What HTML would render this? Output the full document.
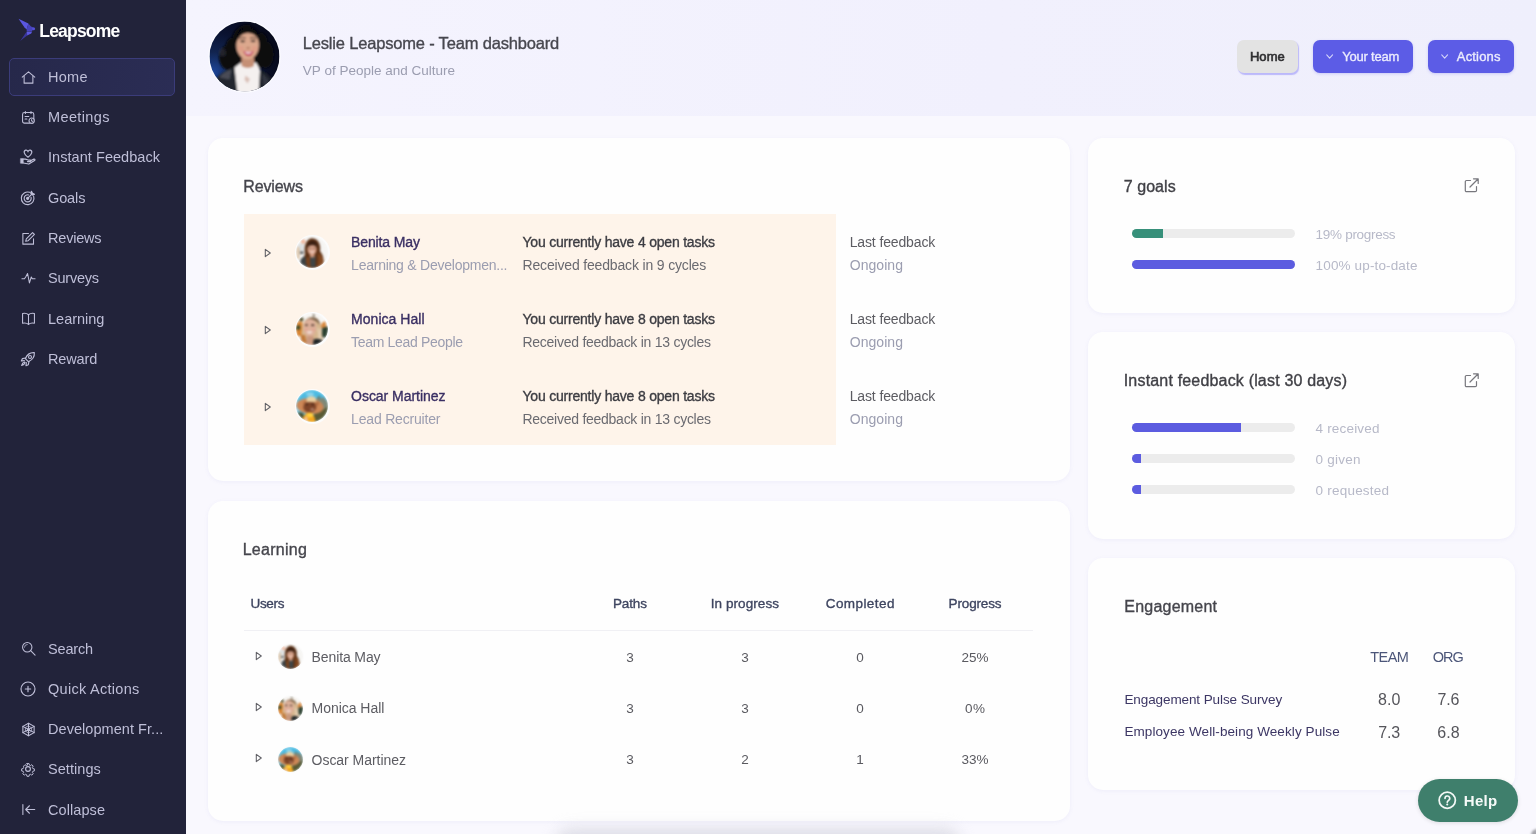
<!DOCTYPE html>
<html lang="en"><head><meta charset="utf-8"><title>Leapsome - Team dashboard</title>
<style>
html,body{margin:0;padding:0;}
body{width:1536px;height:834px;overflow:hidden;position:relative;background:#f9f8fe;font-family:"Liberation Sans",sans-serif;filter:blur(0.55px);}
.a{position:absolute;box-sizing:border-box;}
.t{position:absolute;white-space:nowrap;line-height:1;font-family:"Liberation Sans",sans-serif;}
.card{position:absolute;box-sizing:border-box;background:#fefefe;border-radius:15px;box-shadow:0 1px 4px rgba(120,110,200,0.08);}
svg{position:absolute;overflow:visible;}
#shapes{position:absolute;left:0;top:0;width:1536px;height:834px;}
#txt{position:absolute;left:0;top:0;width:1536px;height:834px;will-change:transform;}

</style></head>
<body>
<div id="shapes">
<div class="a" style="left:186.00px;top:0.00px;width:1350.00px;height:115.50px;background:linear-gradient(90deg,#f5f4fe 0%,#f1f0fd 60%,#efeffc 100%);"></div>
<div class="a" style="left:0.00px;top:0.00px;width:186.00px;height:834.00px;background:#22233a;"></div>
<svg style="left:18px;top:17.500px" width="18" height="24" viewBox="0 0 18 24">
<polygon points="0.500,0.800 10.400,5.500 8.700,11.600 6.500,9.500" fill="#5b57e2"/>
<polygon points="10.400,5.500 13,8.600 15,9.300 14.300,13 8.700,13.200 8.700,11.300" fill="#4844bd"/>
<ellipse cx="15.500" cy="10.800" rx="1.600" ry="1.500" fill="#5450d6"/>
<polygon points="8.900,13.400 14.200,13.600 13.200,15.600 9.100,17.400" fill="#5b57e2"/>
<polygon points="8.900,13.200 9.200,17.400 5,20.800 2.200,23 " fill="#3a379c"/>
</svg>
<div class="a" style="left:9.00px;top:57.50px;width:166.00px;height:38.50px;background:linear-gradient(100deg,#26284a 0%,#2b2d55 100%);border:1px solid #3b3c7a;border-radius:5px;"></div>
<svg style="left:20.70px;top:69.50px" width="15" height="15" viewBox="0 0 24 24" fill="none" stroke="#bfbfd8" stroke-width="1.7" stroke-linecap="round" stroke-linejoin="round"><path d="M2 11.5 L12 3 L22 11.5"/><path d="M5 10 V21 H19 V10"/></svg>
<svg style="left:20.70px;top:109.50px" width="15" height="15" viewBox="0 0 24 24" fill="none" stroke="#bfbfd8" stroke-width="1.7" stroke-linecap="round" stroke-linejoin="round"><rect x="2.5" y="4" width="18" height="17" rx="3"/><path d="M7 2.5v3M16 2.5v3M6.5 10.5h6M6.5 14.5h3"/><circle cx="17" cy="17" r="4.2" fill="#22233a"/><path d="M17 15.2v2l1.3 1"/></svg>
<svg style="left:20.20px;top:149.40px" width="16" height="16" viewBox="0 0 24 24" fill="none" stroke="#bfbfd8" stroke-width="1.7" stroke-linecap="round" stroke-linejoin="round"><path d="M12 12.300C5.500 8 4.800 2.800 8.600 1.700 10.500 1.300 12 3 12 4.300 12 3 13.500 1.300 15.400 1.700 19.200 2.800 18.500 8 12 12.300Z"/><path d="M1.200 14.500h3.600v6.800H1.200z" fill="#bfbfd8" stroke-width="1"/><path d="M4.800 15.200h3.400l4 1.400h3.200c1.400 0 1.400 2.300 0 2.300h-4.200"/><path d="M15.800 17.600l5-2.400c1.500-.5 2.400 1.300 1 2.100L13.200 22.600 4.800 21"/></svg>
<svg style="left:20.20px;top:189.60px" width="16" height="16" viewBox="0 0 24 24" fill="none" stroke="#bfbfd8" stroke-width="1.7" stroke-linecap="round" stroke-linejoin="round"><path d="M20.5 9.5A9.5 9.5 0 1 1 14.5 3.5"/><path d="M16.6 11A5.3 5.3 0 1 1 13 7.4"/><circle cx="11.5" cy="12.5" r="1.6" fill="#bfbfd8"/><path d="M11.5 12.5L18 6"/><path d="M16 4.5l1.2-2.5 1.5 3 3 1.5-2.5 1.2z" fill="#bfbfd8"/></svg>
<svg style="left:20.70px;top:230.50px" width="15" height="15" viewBox="0 0 24 24" fill="none" stroke="#bfbfd8" stroke-width="1.7" stroke-linecap="round" stroke-linejoin="round"><path d="M20 12.5V21H3V4h9"/><path d="M8.5 12.5L18.5 2.5l3 3-10 10-4 1z"/></svg>
<svg style="left:20.70px;top:270.80px" width="15" height="15" viewBox="0 0 24 24" fill="none" stroke="#bfbfd8" stroke-width="1.7" stroke-linecap="round" stroke-linejoin="round"><path d="M1.5 12.5h4l2-3 3-5.5 3 15 3-9.5 1.5 3h4.5"/></svg>
<svg style="left:20.70px;top:311.00px" width="15" height="15" viewBox="0 0 24 24" fill="none" stroke="#bfbfd8" stroke-width="1.7" stroke-linecap="round" stroke-linejoin="round"><path d="M12 6C10 4 6 3.2 2.5 4v15.5c3.500-.8 7.500 0 9.500 2 2-2 6-2.800 9.500-2V4C18 3.200 14 4 12 6z"/><path d="M12 6v15.500"/></svg>
<svg style="left:20.20px;top:350.80px" width="16" height="16" viewBox="0 0 24 24" fill="none" stroke="#bfbfd8" stroke-width="1.7" stroke-linecap="round" stroke-linejoin="round"><path d="M21.5 2.500c-6-.5-11 3-13.500 9l4.500 4.500c6-2.500 9.500-7.500 9-13.500z"/><circle cx="15" cy="9" r="2.200"/><path d="M8.500 10.500L3.500 11.500l-1.500 3.500 4.500-.5M13.500 15.500l-1 5-3.500 1.500.5-4.500M7 16.500c-2.500.5-4 2.500-4.500 5 2.500-.5 4.500-2 5-4.500"/></svg>
<svg style="left:20.70px;top:641.30px" width="15" height="15" viewBox="0 0 24 24" fill="none" stroke="#bfbfd8" stroke-width="1.7" stroke-linecap="round" stroke-linejoin="round"><circle cx="10" cy="10" r="7.500"/><path d="M15.500 15.500L22.500 22.500"/><path d="M5.500 10a4.500 4.500 0 0 1 4.500-4.500" stroke-width="1.200"/></svg>
<svg style="left:20.20px;top:680.60px" width="16" height="16" viewBox="0 0 24 24" fill="none" stroke="#bfbfd8" stroke-width="1.7" stroke-linecap="round" stroke-linejoin="round"><circle cx="12" cy="12" r="10.500"/><path d="M12 8v8M8 12h8"/></svg>
<svg style="left:20.70px;top:721.50px" width="15" height="15" viewBox="0 0 24 24" fill="none" stroke="#bfbfd8" stroke-width="1.7" stroke-linecap="round" stroke-linejoin="round"><path d="M12 2L21 7v10l-9 5-9-5V7z"/><path d="M12 2v20M3 7l18 10M21 7L3 17"/><path d="M12 6.500l5 2.800v5.400l-5 2.800-5-2.800V9.300z" stroke-width="1.200"/><circle cx="12" cy="12" r="1.500" fill="#bfbfd8"/></svg>
<svg style="left:20.20px;top:761.20px" width="16" height="16" viewBox="0 0 24 24" fill="none" stroke="#bfbfd8" stroke-width="1.7" stroke-linecap="round" stroke-linejoin="round"><circle cx="12" cy="12" r="3.600"/><path d="M10.200 2.500h3.600l.6 2.700 1.900.8 2.300-1.500 2.500 2.500-1.500 2.300.8 1.900 2.700.6v3.600l-2.700.6-.8 1.900 1.500 2.300-2.500 2.500-2.300-1.500-1.900.8-.6 2.700h-3.600l-.6-2.700-1.900-.8-2.300 1.500-2.500-2.500 1.500-2.300-.8-1.900-2.700-.6v-3.600l2.700-.6.8-1.900L4.300 7l2.500-2.500 2.300 1.500 1.900-.8z" transform="translate(12 12) scale(.86) translate(-12 -12)"/></svg>
<svg style="left:20.70px;top:802.10px" width="15" height="15" viewBox="0 0 24 24" fill="none" stroke="#bfbfd8" stroke-width="1.7" stroke-linecap="round" stroke-linejoin="round"><path d="M3 4v16M22 12H8M13.500 6L7.500 12l6 6"/></svg>
<svg style="left:208px;top:20px" width="73" height="73" viewBox="-1.500 -1.500 73 73">
<defs><clipPath id="cl"><circle cx="35" cy="35" r="35"/></clipPath>
<radialGradient id="lbg" cx="0.050" cy="0.720" r="0.950"><stop offset="0" stop-color="#1d469a"/><stop offset="0.300" stop-color="#11244f"/><stop offset="0.600" stop-color="#0a1230"/><stop offset="1" stop-color="#070a1c"/></radialGradient>
<filter id="b1" x="-10%" y="-10%" width="120%" height="120%"><feGaussianBlur stdDeviation="0.850"/></filter></defs>
<circle cx="35" cy="35" r="36.300" fill="#fbfbff"/>
<g clip-path="url(#cl)"><rect width="70" height="70" fill="url(#lbg)"/>
<g filter="url(#b1)">
<ellipse cx="37" cy="22" rx="15.500" ry="19" fill="#07070b"/>
<ellipse cx="38" cy="40" rx="19" ry="9" fill="#08080d"/>
<ellipse cx="19" cy="36" rx="9.500" ry="12.500" fill="#0b0b11"/>
<ellipse cx="23" cy="26" rx="7" ry="10" fill="#08080d"/>
<ellipse cx="56" cy="33" rx="8.500" ry="13.500" fill="#09090e"/>
<ellipse cx="52" cy="20" rx="6" ry="9" fill="#08080d"/>
<ellipse cx="27" cy="47" rx="7" ry="5" fill="#0b0b11"/>
<ellipse cx="13" cy="31" rx="3.500" ry="4" fill="#3a3c48" opacity="0.500"/>
<path d="M6 60 Q9 50 26.500 45.500 L30 72 L4 72Z" fill="#24272f"/>
<path d="M10 56 Q14 50 22 48 L20 58Z" fill="#666b76" opacity="0.550"/>
<path d="M46.500 47 Q60 51 63.500 60 L62 72 L47 72Z" fill="#1f2229"/>
<path d="M52 52 Q58 55 60 62 L54 64Z" fill="#4a4f5a" opacity="0.450"/>
<path d="M25 46 L31.500 41 L46.500 41 L50.500 48 L49 72 L28 72Z" fill="#f4f0ef"/>
<path d="M36 54 L40.500 57.500 L38 62 L35 58Z" fill="#d9bfb6"/>
<path d="M32 36 h12.500 v8.500 q-6.200 4 -12.500 0z" fill="#c58f74"/>
<ellipse cx="38.100" cy="23.500" rx="11.300" ry="14.400" fill="#dca88d"/>
<ellipse cx="31.500" cy="27" rx="3" ry="2.500" fill="#e39a86" opacity="0.600"/>
<ellipse cx="45" cy="27" rx="3" ry="2.500" fill="#e39a86" opacity="0.600"/>
<ellipse cx="33.200" cy="19.800" rx="2.600" ry="1.150" fill="#3a2a28"/>
<ellipse cx="43.600" cy="19.600" rx="2.600" ry="1.150" fill="#3a2a28"/>
<path d="M30 17 q3.200-1.800 6.200-.400M40.500 16.600q3-1.400 6.200.400" stroke="#2a1c1a" stroke-width="1" fill="none"/>
<ellipse cx="38.600" cy="26.500" rx="2" ry="1" fill="#b97f68"/>
<path d="M33.800 29.600 Q39 31 44.200 29.400 Q42.500 34.600 39 34.600 Q35.500 34.600 33.800 29.600Z" fill="#c12853"/>
<path d="M35 30.300 Q39 31.300 43 30.200 Q41.500 32.600 39 32.600 Q36.500 32.600 35 30.300Z" fill="#f7ecea"/>
<path d="M26.500 22 Q26 8 38 5.500 Q49 6 50 21 Q47 11.500 38 11.500 Q30 12 26.500 22Z" fill="#07070b"/>
</g></g></svg>
<div class="a" style="left:1237.25px;top:40.30px;width:61.00px;height:33.00px;background:#e3e3e3;border-radius:7px;box-shadow:1px 1.5px 1px rgba(170,165,250,0.75);"></div>
<div class="a" style="left:1313.30px;top:40.30px;width:99.60px;height:33.00px;background:#5c5ce6;border-radius:7px;box-shadow:0 1px 3px rgba(90,90,230,0.25);"></div>
<svg style="left:1326.400px;top:53.800px" width="7.300" height="5.500" viewBox="0 0 8 6" fill="none" stroke="#d6d6fa" stroke-width="1.150" stroke-linecap="round" stroke-linejoin="round"><path d="M0.800 1L4 4.500 7.200 1"/></svg>
<div class="a" style="left:1428.00px;top:40.30px;width:86.20px;height:33.00px;background:#5c5ce6;border-radius:7px;box-shadow:0 1px 3px rgba(90,90,230,0.25);"></div>
<svg style="left:1441.400px;top:53.800px" width="7.300" height="5.500" viewBox="0 0 8 6" fill="none" stroke="#d6d6fa" stroke-width="1.150" stroke-linecap="round" stroke-linejoin="round"><path d="M0.800 1L4 4.500 7.200 1"/></svg>
<div class="card" style="left:207.5px;top:137.5px;width:862.20px;height:343.50px"></div>
<div class="card" style="left:207.5px;top:500.5px;width:862.20px;height:320.50px"></div>
<div class="card" style="left:1088.2px;top:137.5px;width:426.60px;height:175.20px"></div>
<div class="card" style="left:1088.2px;top:332px;width:426.60px;height:206.60px"></div>
<div class="card" style="left:1088.2px;top:557.6px;width:426.60px;height:232.00px"></div>
<svg width="0" height="0" style="left:0;top:0"><defs>
<filter id="bs" x="-20%" y="-20%" width="140%" height="140%"><feGaussianBlur stdDeviation="0.7"/></filter>
<clipPath id="c32"><circle cx="16" cy="16" r="16"/></clipPath>
<symbol id="av-benita" viewBox="0 0 32 32"><g clip-path="url(#c32)"><rect width="32" height="32" fill="#f6f5f3"/>
<g>
<rect x="1.500" y="7.500" width="7" height="8" fill="#dde1e3"/>
<rect x="0.500" y="11" width="3.200" height="12" fill="#dcc6ac"/>
<ellipse cx="7.200" cy="5.600" rx="2.400" ry="2.300" fill="#efb79e"/>
<rect x="4" y="15.500" width="3.500" height="2.500" fill="#5a5d5f"/>
<path d="M4 32 L4.500 24 Q7 19.500 12 19 L22 19.500 Q25 22 25 32Z" fill="#3b4143"/>
<path d="M9 18 Q7.500 8 12.500 3.500 Q16.500 1 21 4 Q25 8 24 15 Q27.500 19 27.500 25 Q27.500 30 25 31 L20 32 L12 32 Q9.500 27 10 22 Q7.500 21 9 18Z" fill="#5e3216"/>
<path d="M22 17 Q27 20 27.500 25 Q27.500 30 25 31 L21 31.500 Q23 24 22 17Z" fill="#824821"/>
<path d="M10 22 Q9.500 27 12 32 L15.500 32 Q14 26 14.500 21Z" fill="#7a431e"/>
<path d="M14 20 h5.500 v11 h-5z" fill="#3f4547"/>
<path d="M14 17 h4.500 v4 q-2.200 1.200 -4.500 0z" fill="#c99378"/>
<ellipse cx="16" cy="13.400" rx="4.500" ry="5.500" fill="#dba68e"/>
<ellipse cx="14.200" cy="12.300" rx="0.900" ry="0.500" fill="#3c2820"/>
<ellipse cx="17.900" cy="12.300" rx="0.900" ry="0.500" fill="#3c2820"/>
<ellipse cx="16.200" cy="16" rx="1.700" ry="0.700" fill="#f3e4df"/>
<path d="M10.800 12 Q11 5 16.500 4.500 Q22 5 21.500 12 Q20 8.500 16 9.300 Q12.500 9 10.800 12Z" fill="#3a1f12"/>
</g></g></symbol>
<symbol id="av-monica" viewBox="0 0 32 32"><g clip-path="url(#c32)"><rect width="32" height="32" fill="#f7f5f2"/>
<g>
<rect x="0" y="8.500" width="6.500" height="14.500" fill="#d78330"/>
<rect x="0" y="12.500" width="4.200" height="4" fill="#3e4a28"/>
<ellipse cx="5.200" cy="6.300" rx="2.300" ry="2" fill="#4b4a28"/>
<rect x="26" y="13.500" width="6" height="11" fill="#2a4030"/>
<path d="M24.500 14.500 Q25.500 8 29.500 8.500 L30.500 14 L26 15Z" fill="#d8883f"/>
<rect x="16.900" y="0.800" width="1.500" height="3.500" fill="#7a7060"/>
<path d="M5.500 31 Q4.500 14 8.500 8 Q13 2.500 20 5 Q25.500 8 25.500 18 Q26.500 24 27 28 L20 32 L6 32Z" fill="#d6b68e"/>
<path d="M4.500 22 Q4 29 9 32 L12 32 Q9.500 26 9 22Z" fill="#c17a3a"/>
<path d="M21 14 Q25.500 17 26.500 27 L22 28 Q22.500 20 21 14Z" fill="#e3cdb0"/>
<path d="M8 10 Q12 2.500 20 5 Q23.500 7 24 12 Q19 5.500 13 7 Q9.500 8 8 10Z" fill="#7a6048"/>
<path d="M11 23 h6.500 v9 h-7.500z" fill="#c9987e"/>
<ellipse cx="13.900" cy="14.500" rx="6.400" ry="8.800" fill="#deb19b"/>
<ellipse cx="10.500" cy="16.800" rx="1.800" ry="1.500" fill="#e39c8a" opacity="0.600"/>
<ellipse cx="17.300" cy="16.800" rx="1.800" ry="1.500" fill="#e39c8a" opacity="0.600"/>
<ellipse cx="10.500" cy="12" rx="1.700" ry="0.850" fill="#4a3428"/>
<ellipse cx="16.700" cy="12.200" rx="1.700" ry="0.850" fill="#4a3428"/>
<path d="M10.300 17.800 Q13.500 19 16.700 17.800 Q15.500 20.800 13.500 20.800 Q11.500 20.800 10.300 17.800Z" fill="#f4e6e1"/>
<path d="M17 32 L17.500 26.500 Q22 24.500 27 27.500 L26 32Z" fill="#1e2426"/>
</g></g></symbol>
<symbol id="av-oscar" viewBox="0 0 32 32"><g clip-path="url(#c32)"><rect width="32" height="32" fill="#56c0e4"/>
<g>
<path d="M0 0 h32 v10 h-32z" fill="#4dbbe2"/>
<ellipse cx="14" cy="4" rx="4" ry="1.800" fill="#8fd6ee"/>
<path d="M20 9 L22.500 6.500 L24 9 L27 7 L32 12 L32 20 L22 18Z" fill="#7f8878"/>
<path d="M22 8 L23 5 L24.500 9Z" fill="#5f6a58"/>
<path d="M18 24 L32 17 L32 32 L16 32Z" fill="#595a34"/>
<path d="M0 22 L7 23 L10 32 L0 32Z" fill="#4a5030"/>
<rect x="0" y="17.500" width="3.500" height="4" fill="#9ad4ea"/>
<ellipse cx="14" cy="16.200" rx="13.700" ry="7.800" fill="#cd8756" transform="rotate(6 14 16)"/>
<ellipse cx="15" cy="13.500" rx="8" ry="3.500" fill="#b06c40"/>
<ellipse cx="15.300" cy="9.200" rx="4.600" ry="3" fill="#ecd4a8"/>
<path d="M10.700 9.500 Q15 7.500 20 9.500 L20.500 12.500 Q15.500 10.500 10.500 12.500Z" fill="#e8cc9c"/>
<ellipse cx="13.800" cy="17.200" rx="6.500" ry="5.300" fill="#7e4428"/>
<ellipse cx="10.800" cy="14.300" rx="1.300" ry="0.800" fill="#2e1810"/>
<ellipse cx="16.800" cy="14.300" rx="1.300" ry="0.800" fill="#2e1810"/>
<ellipse cx="16.300" cy="19.400" rx="2" ry="0.900" fill="#c49a88"/>
<path d="M5.500 32 Q7 24 12.500 22.500 Q18.500 22.500 19.500 32Z" fill="#f4a51c"/>
<ellipse cx="14" cy="25" rx="3.200" ry="2.300" fill="#ffd23e"/>
<ellipse cx="10" cy="29" rx="1.500" ry="2.500" fill="#f2c4a2"/>
</g></g></symbol>
</defs></svg>
<div class="a" style="left:243.75px;top:214.00px;width:592.20px;height:230.80px;background:#fef4ea;"></div>
<svg style="left:264.20px;top:247.60px" width="7.60" height="10.00" viewBox="-1 -1 7.60 10.00" fill="none" stroke="#606066" stroke-width="1.050" stroke-linejoin="round"><path d="M0.300 0.300 L5.30 4.00 L0.300 7.70Z"/></svg>
<div class="a" style="left:295.00px;top:235.00px;width:34.80px;height:34.80px;border-radius:50%;background:#fcfcfc;"></div>
<div class="a" style="left:296.40px;top:236.40px;width:32px;height:32px;border-radius:50%;overflow:hidden;"><svg style="left:0;top:0;filter:blur(0.90px)" width="32" height="32" viewBox="0 0 32 32"><use href="#av-benita"/></svg></div>
<svg style="left:264.20px;top:324.60px" width="7.60" height="10.00" viewBox="-1 -1 7.60 10.00" fill="none" stroke="#606066" stroke-width="1.050" stroke-linejoin="round"><path d="M0.300 0.300 L5.30 4.00 L0.300 7.70Z"/></svg>
<div class="a" style="left:295.00px;top:312.00px;width:34.80px;height:34.80px;border-radius:50%;background:#fcfcfc;"></div>
<div class="a" style="left:296.40px;top:313.40px;width:32px;height:32px;border-radius:50%;overflow:hidden;"><svg style="left:0;top:0;filter:blur(0.90px)" width="32" height="32" viewBox="0 0 32 32"><use href="#av-monica"/></svg></div>
<svg style="left:264.20px;top:401.60px" width="7.60" height="10.00" viewBox="-1 -1 7.60 10.00" fill="none" stroke="#606066" stroke-width="1.050" stroke-linejoin="round"><path d="M0.300 0.300 L5.30 4.00 L0.300 7.70Z"/></svg>
<div class="a" style="left:295.00px;top:389.00px;width:34.80px;height:34.80px;border-radius:50%;background:#fcfcfc;"></div>
<div class="a" style="left:296.40px;top:390.40px;width:32px;height:32px;border-radius:50%;overflow:hidden;"><svg style="left:0;top:0;filter:blur(0.90px)" width="32" height="32" viewBox="0 0 32 32"><use href="#av-oscar"/></svg></div>
<div class="a" style="left:243.75px;top:630.00px;width:789.00px;height:1.00px;background:#f0f0f4;"></div>
<svg style="left:255.10px;top:650.60px" width="7.60" height="10.00" viewBox="-1 -1 7.60 10.00" fill="none" stroke="#606066" stroke-width="1.050" stroke-linejoin="round"><path d="M0.300 0.300 L5.30 4.00 L0.300 7.70Z"/></svg>
<div class="a" style="left:276.80px;top:643.20px;width:27.00px;height:27.00px;border-radius:50%;background:#fcfcfc;"></div>
<div class="a" style="left:277.80px;top:644.20px;width:25px;height:25px;border-radius:50%;overflow:hidden;"><svg style="left:0;top:0;filter:blur(0.80px)" width="25" height="25" viewBox="0 0 32 32"><use href="#av-benita"/></svg></div>
<svg style="left:255.10px;top:701.90px" width="7.60" height="10.00" viewBox="-1 -1 7.60 10.00" fill="none" stroke="#606066" stroke-width="1.050" stroke-linejoin="round"><path d="M0.300 0.300 L5.30 4.00 L0.300 7.70Z"/></svg>
<div class="a" style="left:276.80px;top:694.50px;width:27.00px;height:27.00px;border-radius:50%;background:#fcfcfc;"></div>
<div class="a" style="left:277.80px;top:695.50px;width:25px;height:25px;border-radius:50%;overflow:hidden;"><svg style="left:0;top:0;filter:blur(0.80px)" width="25" height="25" viewBox="0 0 32 32"><use href="#av-monica"/></svg></div>
<svg style="left:255.10px;top:753.20px" width="7.60" height="10.00" viewBox="-1 -1 7.60 10.00" fill="none" stroke="#606066" stroke-width="1.050" stroke-linejoin="round"><path d="M0.300 0.300 L5.30 4.00 L0.300 7.70Z"/></svg>
<div class="a" style="left:276.80px;top:745.80px;width:27.00px;height:27.00px;border-radius:50%;background:#fcfcfc;"></div>
<div class="a" style="left:277.80px;top:746.80px;width:25px;height:25px;border-radius:50%;overflow:hidden;"><svg style="left:0;top:0;filter:blur(0.80px)" width="25" height="25" viewBox="0 0 32 32"><use href="#av-oscar"/></svg></div>
<div class="a" style="left:556.00px;top:829.00px;width:404.00px;height:30.00px;background:#d6d6e0;border-radius:20px;filter:blur(8px);opacity:.85;"></div>
<svg style="left:1464.10px;top:178.20px" width="15" height="15" viewBox="0 0 15 15" fill="none" stroke="#77777d" stroke-width="1.200" stroke-linecap="round" stroke-linejoin="round"><path d="M12.500 8.500V12.500a1.200 1.200 0 0 1-1.200 1.200H2.500A1.200 1.200 0 0 1 1.300 12.500V3.700A1.200 1.200 0 0 1 2.500 2.500H6.500"/><path d="M6 9L14 1M9.500 0.800H14.200V5.500"/></svg>
<div class="a" style="left:1131.70px;top:229.10px;width:162.90px;height:9.00px;background:#ececec;border-radius:5px;overflow:hidden;"></div>
<div class="a" style="left:1131.70px;top:229.10px;width:31.44px;height:9.00px;background:#37907a;border-radius:5px 0 0 5px;"></div>
<div class="a" style="left:1131.70px;top:260.20px;width:162.90px;height:9.00px;background:#ececec;border-radius:5px;overflow:hidden;"></div>
<div class="a" style="left:1131.70px;top:260.20px;width:162.90px;height:9.00px;background:#5c5ce0;border-radius:5px;"></div>
<svg style="left:1464.10px;top:372.80px" width="15" height="15" viewBox="0 0 15 15" fill="none" stroke="#77777d" stroke-width="1.200" stroke-linecap="round" stroke-linejoin="round"><path d="M12.500 8.500V12.500a1.200 1.200 0 0 1-1.200 1.200H2.500A1.200 1.200 0 0 1 1.300 12.500V3.700A1.200 1.200 0 0 1 2.500 2.500H6.500"/><path d="M6 9L14 1M9.500 0.800H14.200V5.500"/></svg>
<div class="a" style="left:1131.70px;top:423.00px;width:162.90px;height:9.00px;background:#ececec;border-radius:5px;overflow:hidden;"></div>
<div class="a" style="left:1131.70px;top:423.00px;width:108.98px;height:9.00px;background:#5c5ce0;border-radius:5px 0 0 5px;"></div>
<div class="a" style="left:1131.70px;top:454.20px;width:162.90px;height:9.00px;background:#ececec;border-radius:5px;overflow:hidden;"></div>
<div class="a" style="left:1131.70px;top:454.20px;width:9.29px;height:9.00px;background:#5c5ce0;border-radius:5px 0 0 5px;"></div>
<div class="a" style="left:1131.70px;top:485.30px;width:162.90px;height:9.00px;background:#ececec;border-radius:5px;overflow:hidden;"></div>
<div class="a" style="left:1131.70px;top:485.30px;width:9.29px;height:9.00px;background:#5c5ce0;border-radius:5px 0 0 5px;"></div>
<div class="a" style="left:1418.40px;top:778.80px;width:99.60px;height:42.90px;background:#3f7f6c;border-radius:21.5px;box-shadow:0 1px 4px rgba(0,0,0,0.12);"></div>
<svg style="left:1438.400px;top:791.100px" width="18.500" height="18.500" viewBox="0 0 18 18" fill="none" stroke="#f3f8f6" stroke-width="1.700" stroke-linecap="round" stroke-linejoin="round"><circle cx="9" cy="9" r="7.900"/><path d="M6.800 7.200a2.300 2.300 0 1 1 3.400 2c-.8.500-1.200.9-1.200 1.800" stroke-width="1.600"/><circle cx="9" cy="13.200" r=".5" fill="#f3f8f6" stroke-width="1"/></svg>
<div class="a" style="left:1531.00px;top:829.00px;width:12.00px;height:12.00px;background:#8a8a90;border-radius:50%;filter:blur(1.200px);opacity:.75;"></div>
</div>
<div id="txt">
<div class="t" style="left:39.26px;top:22.87px;font-size:17.5px;color:#ffffff;letter-spacing:-0.804px;font-weight:700;">Leapsome</div>
<div class="t" style="left:48.06px;top:70.01px;font-size:14.5px;color:#bfbfd8;letter-spacing:0.254px;">Home</div>
<div class="t" style="left:48.06px;top:110.21px;font-size:14.5px;color:#bfbfd8;letter-spacing:0.358px;">Meetings</div>
<div class="t" style="left:48.06px;top:150.41px;font-size:14.5px;color:#bfbfd8;letter-spacing:0.047px;">Instant Feedback</div>
<div class="t" style="left:48.06px;top:190.76px;font-size:14.5px;color:#bfbfd8;letter-spacing:-0.134px;">Goals</div>
<div class="t" style="left:48.06px;top:231.21px;font-size:14.5px;color:#bfbfd8;letter-spacing:-0.225px;">Reviews</div>
<div class="t" style="left:48.06px;top:271.31px;font-size:14.5px;color:#bfbfd8;letter-spacing:-0.240px;">Surveys</div>
<div class="t" style="left:48.06px;top:311.61px;font-size:14.5px;color:#bfbfd8;letter-spacing:-0.014px;">Learning</div>
<div class="t" style="left:48.06px;top:351.81px;font-size:14.5px;color:#bfbfd8;letter-spacing:-0.155px;">Reward</div>
<div class="t" style="left:48.06px;top:641.51px;font-size:14.5px;color:#bfbfd8;letter-spacing:-0.200px;">Search</div>
<div class="t" style="left:48.06px;top:681.51px;font-size:14.5px;color:#bfbfd8;letter-spacing:0.279px;">Quick Actions</div>
<div class="t" style="left:48.06px;top:722.01px;font-size:14.5px;color:#bfbfd8;letter-spacing:0.047px;">Development Fr...</div>
<div class="t" style="left:48.06px;top:762.26px;font-size:14.5px;color:#bfbfd8;letter-spacing:0.043px;">Settings</div>
<div class="t" style="left:48.06px;top:802.76px;font-size:14.5px;color:#bfbfd8;letter-spacing:0.074px;">Collapse</div>
<div class="t" style="left:302.68px;top:35.30px;font-size:16.5px;color:#47474f;letter-spacing:-0.176px;-webkit-text-stroke:0.35px #47474f;">Leslie Leapsome - Team dashboard</div>
<div class="t" style="left:302.87px;top:63.69px;font-size:13.5px;color:#9b9db0;">VP of People and Culture</div>
<div class="t" style="left:1249.95px;top:50.43px;font-size:13px;color:#2e2e30;letter-spacing:0.039px;-webkit-text-stroke:0.6px #2e2e30;">Home</div>
<div class="t" style="left:1342.15px;top:50.43px;font-size:13px;color:#ececfd;letter-spacing:-0.205px;-webkit-text-stroke:0.35px #ececfd;">Your team</div>
<div class="t" style="left:1456.86px;top:50.43px;font-size:13px;color:#ececfd;letter-spacing:0.152px;-webkit-text-stroke:0.35px #ececfd;">Actions</div>
<div class="t" style="left:243.21px;top:179.09px;font-size:16px;color:#45454c;letter-spacing:-0.112px;-webkit-text-stroke:0.35px #45454c;">Reviews</div>
<div class="t" style="left:351.09px;top:234.55px;font-size:14px;color:#3a2f63;letter-spacing:-0.125px;-webkit-text-stroke:0.35px #3a2f63;">Benita May</div>
<div class="t" style="left:351.09px;top:258.45px;font-size:14px;color:#9b9db0;letter-spacing:-0.238px;">Learning &amp; Developmen...</div>
<div class="t" style="left:522.49px;top:234.55px;font-size:14px;color:#3c3c42;letter-spacing:-0.207px;-webkit-text-stroke:0.35px #3c3c42;">You currently have 4 open tasks</div>
<div class="t" style="left:522.49px;top:258.45px;font-size:14px;color:#6a6a70;letter-spacing:-0.163px;">Received feedback in 9 cycles</div>
<div class="t" style="left:849.69px;top:234.55px;font-size:14px;color:#5c5c62;letter-spacing:-0.130px;">Last feedback</div>
<div class="t" style="left:849.69px;top:258.45px;font-size:14px;color:#9b9db0;letter-spacing:0.063px;">Ongoing</div>
<div class="t" style="left:351.09px;top:311.55px;font-size:14px;color:#3a2f63;letter-spacing:0.027px;-webkit-text-stroke:0.35px #3a2f63;">Monica Hall</div>
<div class="t" style="left:351.09px;top:335.45px;font-size:14px;color:#9b9db0;letter-spacing:-0.323px;">Team Lead People</div>
<div class="t" style="left:522.49px;top:311.55px;font-size:14px;color:#3c3c42;letter-spacing:-0.207px;-webkit-text-stroke:0.35px #3c3c42;">You currently have 8 open tasks</div>
<div class="t" style="left:522.49px;top:335.45px;font-size:14px;color:#6a6a70;letter-spacing:-0.262px;">Received feedback in 13 cycles</div>
<div class="t" style="left:849.69px;top:311.55px;font-size:14px;color:#5c5c62;letter-spacing:-0.130px;">Last feedback</div>
<div class="t" style="left:849.69px;top:335.45px;font-size:14px;color:#9b9db0;letter-spacing:0.063px;">Ongoing</div>
<div class="t" style="left:351.09px;top:388.55px;font-size:14px;color:#3a2f63;letter-spacing:-0.039px;-webkit-text-stroke:0.35px #3a2f63;">Oscar Martinez</div>
<div class="t" style="left:351.09px;top:412.45px;font-size:14px;color:#9b9db0;letter-spacing:-0.186px;">Lead Recruiter</div>
<div class="t" style="left:522.49px;top:388.55px;font-size:14px;color:#3c3c42;letter-spacing:-0.207px;-webkit-text-stroke:0.35px #3c3c42;">You currently have 8 open tasks</div>
<div class="t" style="left:522.49px;top:412.45px;font-size:14px;color:#6a6a70;letter-spacing:-0.262px;">Received feedback in 13 cycles</div>
<div class="t" style="left:849.69px;top:388.55px;font-size:14px;color:#5c5c62;letter-spacing:-0.130px;">Last feedback</div>
<div class="t" style="left:849.69px;top:412.45px;font-size:14px;color:#9b9db0;letter-spacing:0.063px;">Ongoing</div>
<div class="t" style="left:242.71px;top:541.59px;font-size:16px;color:#45454c;letter-spacing:0.273px;-webkit-text-stroke:0.35px #45454c;">Learning</div>
<div class="t" style="left:250.62px;top:597.09px;font-size:13.5px;color:#3e4560;letter-spacing:-0.369px;-webkit-text-stroke:0.35px #3e4560;">Users</div>
<div class="t" style="left:613.02px;top:597.09px;font-size:13.5px;color:#3e4560;letter-spacing:-0.161px;-webkit-text-stroke:0.35px #3e4560;">Paths</div>
<div class="t" style="left:710.67px;top:597.09px;font-size:13.5px;color:#3e4560;letter-spacing:0.084px;-webkit-text-stroke:0.35px #3e4560;">In progress</div>
<div class="t" style="left:825.72px;top:597.09px;font-size:13.5px;color:#3e4560;letter-spacing:0.424px;-webkit-text-stroke:0.35px #3e4560;">Completed</div>
<div class="t" style="left:948.62px;top:597.09px;font-size:13.5px;color:#3e4560;letter-spacing:-0.164px;-webkit-text-stroke:0.35px #3e4560;">Progress</div>
<div class="t" style="left:311.59px;top:650.15px;font-size:14px;color:#5c5c62;letter-spacing:-0.114px;">Benita May</div>
<div class="t" style="left:626.22px;top:650.69px;font-size:13.5px;color:#5a5a60;letter-spacing:-0.231px;">3</div>
<div class="t" style="left:741.22px;top:650.69px;font-size:13.5px;color:#5a5a60;letter-spacing:-0.231px;">3</div>
<div class="t" style="left:856.32px;top:650.69px;font-size:13.5px;color:#5a5a60;letter-spacing:-0.231px;">0</div>
<div class="t" style="left:961.62px;top:650.69px;font-size:13.5px;color:#5a5a60;letter-spacing:-0.071px;">25%</div>
<div class="t" style="left:311.59px;top:701.45px;font-size:14px;color:#5c5c62;letter-spacing:-0.033px;">Monica Hall</div>
<div class="t" style="left:626.22px;top:701.99px;font-size:13.5px;color:#5a5a60;letter-spacing:-0.231px;">3</div>
<div class="t" style="left:741.22px;top:701.99px;font-size:13.5px;color:#5a5a60;letter-spacing:-0.231px;">3</div>
<div class="t" style="left:856.32px;top:701.99px;font-size:13.5px;color:#5a5a60;letter-spacing:-0.231px;">0</div>
<div class="t" style="left:965.12px;top:701.99px;font-size:13.5px;color:#5a5a60;letter-spacing:0.366px;">0%</div>
<div class="t" style="left:311.59px;top:752.75px;font-size:14px;color:#5c5c62;letter-spacing:-0.039px;">Oscar Martinez</div>
<div class="t" style="left:626.22px;top:753.29px;font-size:13.5px;color:#5a5a60;letter-spacing:-0.231px;">3</div>
<div class="t" style="left:741.22px;top:753.29px;font-size:13.5px;color:#5a5a60;letter-spacing:-0.231px;">2</div>
<div class="t" style="left:856.32px;top:753.29px;font-size:13.5px;color:#5a5a60;letter-spacing:-0.231px;">1</div>
<div class="t" style="left:961.62px;top:753.29px;font-size:13.5px;color:#5a5a60;letter-spacing:-0.071px;">33%</div>
<div class="t" style="left:1123.76px;top:179.49px;font-size:16px;color:#404046;letter-spacing:0.058px;-webkit-text-stroke:0.35px #404046;">7 goals</div>
<div class="t" style="left:1315.62px;top:227.69px;font-size:13.5px;color:#b7b9c8;letter-spacing:-0.302px;">19% progress</div>
<div class="t" style="left:1315.62px;top:258.89px;font-size:13.5px;color:#b7b9c8;letter-spacing:0.140px;">100% up-to-date</div>
<div class="t" style="left:1123.76px;top:373.09px;font-size:16px;color:#404046;letter-spacing:0.178px;-webkit-text-stroke:0.35px #404046;">Instant feedback (last 30 days)</div>
<div class="t" style="left:1315.62px;top:421.69px;font-size:13.5px;color:#b7b9c8;letter-spacing:0.166px;">4 received</div>
<div class="t" style="left:1315.62px;top:452.79px;font-size:13.5px;color:#b7b9c8;letter-spacing:0.224px;">0 given</div>
<div class="t" style="left:1315.62px;top:483.89px;font-size:13.5px;color:#b7b9c8;letter-spacing:0.207px;">0 requested</div>
<div class="t" style="left:1124.26px;top:598.59px;font-size:16px;color:#45454c;letter-spacing:0.223px;-webkit-text-stroke:0.35px #45454c;">Engagement</div>
<div class="t" style="left:1370.21px;top:650.01px;font-size:14.5px;color:#4c5679;letter-spacing:-0.546px;">TEAM</div>
<div class="t" style="left:1432.76px;top:650.01px;font-size:14.5px;color:#4c5679;letter-spacing:-1.043px;">ORG</div>
<div class="t" style="left:1124.42px;top:692.79px;font-size:13.5px;color:#3c3664;letter-spacing:-0.094px;">Engagement Pulse Survey</div>
<div class="t" style="left:1124.42px;top:725.49px;font-size:13.5px;color:#3c3664;letter-spacing:0.086px;">Employee Well-being Weekly Pulse</div>
<div class="t" style="left:1378.01px;top:692.29px;font-size:16px;color:#55555b;letter-spacing:0.049px;">8.0</div>
<div class="t" style="left:1437.46px;top:692.29px;font-size:16px;color:#55555b;letter-spacing:-0.101px;">7.6</div>
<div class="t" style="left:1378.16px;top:725.29px;font-size:16px;color:#55555b;letter-spacing:-0.101px;">7.3</div>
<div class="t" style="left:1437.31px;top:725.29px;font-size:16px;color:#55555b;letter-spacing:0.049px;">6.8</div>
<div class="t" style="left:1463.83px;top:792.87px;font-size:15px;color:#f6faf8;letter-spacing:0.290px;font-weight:700;">Help</div>
</div>
</body></html>
